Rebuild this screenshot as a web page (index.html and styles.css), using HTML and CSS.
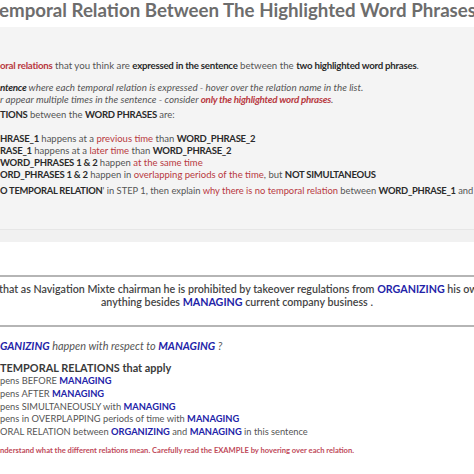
FILE: index.html
```html
<!DOCTYPE html>
<html>
<head>
<meta charset="utf-8">
<link rel="stylesheet" href="styles.css">
</head>
<body>
<h1 class="title">emporal Relation Between The Highlighted Word Phrases</h1>
<section class="panel">
  <p class="line step"><b class="red">oral relations</b> that you think are <b>expressed in the sentence</b> between the <b>two highlighted word phrases</b>.</p>
  <div class="notes">
    <p class="line"><b>ntence</b> where each temporal relation is expressed - hover over the relation name in the list.</p>
    <p class="line">r appear multiple times in the sentence - consider <b class="red">only the highlighted word phrases</b>.</p>
  </div>
  <p class="line defs-head"><b>TIONS</b> between the <b>WORD PHRASES</b> are:</p>
  <ul class="defs">
    <li class="line"><b>HRASE_1</b> happens at a <span class="red">previous time</span> than <b>WORD_PHRASE_2</b></li>
    <li class="line"><b>RASE_1</b> happens at a <span class="red">later time</span> than <b>WORD_PHRASE_2</b></li>
    <li class="line"><b>WORD_PHRASES 1 &amp; 2</b> happen <span class="red">at the same time</span></li>
    <li class="line"><b>ORD_PHRASES 1 &amp; 2</b> happen in <span class="red">overlapping periods of the time</span>, but <b>NOT SIMULTANEOUS</b></li>
  </ul>
  <p class="line none"><b>O TEMPORAL RELATION</b>' in STEP 1, then explain <span class="red">why there is no temporal relation</span> between <b>WORD_PHRASE_1</b> and <b>WORD_PHRASE_2</b></p>
</section>
<div class="panel-foot"></div>

<section class="sentence">
  <p class="s1">that as Navigation Mixte chairman he is prohibited by takeover regulations from <b class="blue">ORGANIZING</b> his own bid or doing</p>
  <p class="s2">anything besides <b class="blue">MANAGING</b> current company business .</p>
</section>

<section class="question">
  <p class="ask"><b class="blue">GANIZING</b> happen with respect to <b class="blue">MANAGING</b> ?</p>
  <h2 class="apply">TEMPORAL RELATIONS that apply</h2>
  <ul class="opts">
    <li>pens BEFORE <b class="blue">MANAGING</b></li>
    <li>pens AFTER <b class="blue">MANAGING</b></li>
    <li>pens SIMULTANEOUSLY with <b class="blue">MANAGING</b></li>
    <li>pens in OVERPLAPPING periods of time with <b class="blue">MANAGING</b></li>
    <li>ORAL RELATION between <b class="blue">ORGANIZING</b> and <b class="blue">MANAGING</b> in this sentence</li>
  </ul>
  <p class="hint">nderstand what the different relations mean. Carefully read the EXAMPLE by hovering over each relation.</p>
</section>
<div class="next-panel"></div>
</body>
</html>
```
FILE: styles.css
```css
html, body {
  margin: 0;
  padding: 0;
  background: #fff;
  overflow: hidden;
  width: 474px;
  height: 474px;
}
body {
  font-family: Lato, "Open Sans", "Liberation Sans", sans-serif;
  color: #555;
  white-space: nowrap;
}
p, ul, h1, h2 { margin: 0; padding: 0; }
ul { list-style: none; }
b { color: #2a2a2a; font-weight: 700; }
.red, b.red { color: #b8393f; }
.blue, b.blue { color: #2323a8; }

.title {
  font-size: 18.7px;
  line-height: 20px;
  font-weight: 700;
  color: #6d6d6d;
  margin-left: -1px;
}

.panel {
  margin-top: 7px;
  background: #f4f4f4;
  padding: 32px 0 32px 0;
  font-size: 9.5px;
  border-bottom: 1px solid #e6e6e6;
}
.panel b { letter-spacing: -0.25px; }
.line { line-height: 12px; }
.step { font-size: 9.7px; }
.notes { margin-top: 11px; font-style: italic; font-size: 9.8px; }
.notes .line { line-height: 11.5px; }
.defs-head { margin-top: 4px; }
.defs { margin-top: 12px; }
.none { margin-top: 4px; font-size: 9.35px; }

.panel-foot {
  height: 12px;
  background: #f1f1f1;
}

.sentence {
  margin-top: 33px;
  border-top: 2px solid #b5b5b5;
  border-bottom: 2px solid #b5b5b5;
  padding: 6px 0 17px;
  font-size: 10.7px;
  font-weight: 600;
  line-height: 12.5px;
  color: #444;
  display: flex;
  flex-direction: column;
  align-items: center;
}
.sentence .s1 { align-self: flex-start; margin-left: -1px; }

.question {
  padding-top: 12px;
  font-size: 9.2px;
}
.ask { font-style: italic; line-height: 13px; font-size: 10.9px; }
.apply {
  margin-top: 9px;
  font-size: 10.9px;
  line-height: 14px;
  font-weight: 700;
  color: #3a3a3a;
}
.opts { font-size: 9.3px; }
.opts li { line-height: 12.8px; }
.hint {
  margin-top: 6px;
  font-size: 7.6px;
  font-weight: 700;
  color: #c04a5a;
  line-height: 10px;
}
.next-panel {
  margin-top: 25px;
  height: 40px;
  background: #f7f7f7;
  border-top: 1px solid #e8e8e8;
}
```
